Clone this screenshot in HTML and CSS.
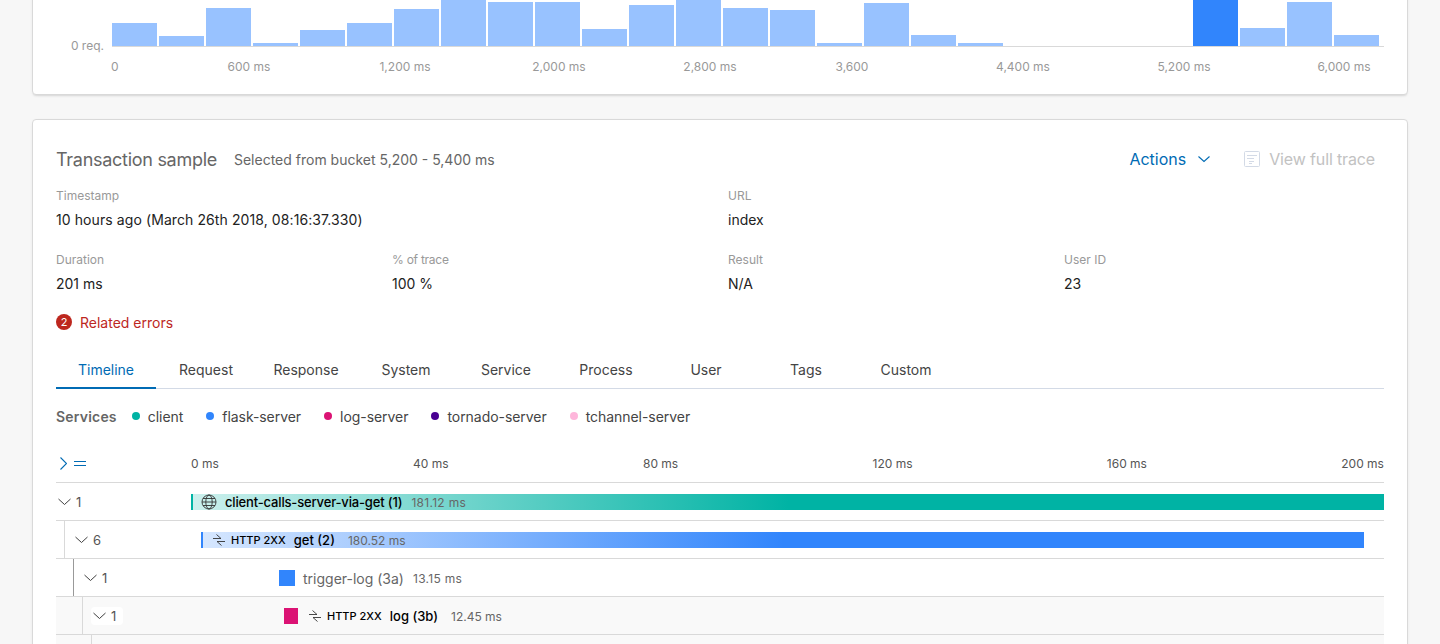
FILE: index.html
```html
<!DOCTYPE html>
<html lang="en">
<head>
<meta charset="utf-8">
<title>Transaction sample</title>
<link rel="stylesheet" href="styles.css">
</head>
<body>
<main class="page">
  <section class="panel panel-chart">
    <svg class="histogram" width="1374" height="96" viewBox="0 0 1374 96">
      <g class="bars">
        <rect x="79" y="42" width="45" height="23"/><rect x="126" y="55" width="45" height="10"/><rect x="173" y="27" width="45" height="38"/><rect x="220" y="62" width="45" height="3"/><rect x="267" y="49" width="45" height="16"/><rect x="314" y="42" width="45" height="23"/><rect x="361" y="28" width="45" height="37"/><rect x="408" y="19" width="45" height="46"/><rect x="455" y="21" width="45" height="44"/><rect x="502" y="21" width="45" height="44"/><rect x="549" y="48" width="45" height="17"/><rect x="596" y="24" width="45" height="41"/><rect x="643" y="19" width="45" height="46"/><rect x="690" y="27" width="45" height="38"/><rect x="737" y="29" width="45" height="36"/><rect x="784" y="62" width="45" height="3"/><rect x="831" y="22" width="45" height="43"/><rect x="878" y="54" width="45" height="11"/><rect x="925" y="62" width="45" height="3"/>
        <rect class="selected" x="1160" y="19" width="45" height="46"/>
        <rect x="1207" y="47" width="45" height="18"/><rect x="1254" y="21" width="45" height="44"/><rect x="1301" y="54" width="45" height="11"/>
      </g>
      <line class="baseline" x1="79" y1="65.5" x2="1351" y2="65.5"/>
      <text class="tick" x="71" y="69" text-anchor="end">0 req.</text>
      <text class="tick" x="78" y="90">0</text>
      <text class="tick" x="216" y="90" text-anchor="middle">600 ms</text>
      <text class="tick" x="372" y="90" text-anchor="middle">1,200 ms</text>
      <text class="tick" x="526" y="90" text-anchor="middle">2,000 ms</text>
      <text class="tick" x="677" y="90" text-anchor="middle">2,800 ms</text>
      <text class="tick" x="819" y="90" text-anchor="middle">3,600</text>
      <text class="tick" x="990" y="90" text-anchor="middle">4,400 ms</text>
      <text class="tick" x="1151" y="90" text-anchor="middle">5,200 ms</text>
      <text class="tick" x="1311" y="90" text-anchor="middle">6,000 ms</text>
    </svg>
  </section>

  <section class="panel panel-sample">
    <header class="sample-head">
      <div class="sample-title">
        <h2>Transaction sample</h2>
        <span class="bucket">Selected from bucket 5,200 - 5,400 ms</span>
      </div>
      <div class="sample-actions">
        <button class="btn-actions">Actions
          <svg width="14" height="14" viewBox="0 0 14 14"><path d="M1.500 4.500 7 9.500l5.500-5" fill="none" stroke="currentColor" stroke-width="1.100"/></svg>
        </button>
        <span class="btn-trace">
          <svg width="16" height="16" viewBox="0 0 16 16" fill="none" stroke="currentColor"><rect x="0.500" y="0.500" width="15" height="15" rx="1"/><path d="M3 4.500h10M3 7.500h7M5 10.500h5M5 12.500h3"/></svg>
          View full trace
        </span>
      </div>
    </header>

    <dl class="facts">
      <div class="fact span-2"><dt>Timestamp</dt><dd class="stamp">10 hours ago (March 26th 2018, 08:16:37.330)</dd></div>
      <div class="fact span-2"><dt>URL</dt><dd>index</dd></div>
      <div class="fact"><dt>Duration</dt><dd>201 ms</dd></div>
      <div class="fact"><dt class="trace-label">% of trace</dt><dd>100 %</dd></div>
      <div class="fact"><dt>Result</dt><dd>N/A</dd></div>
      <div class="fact"><dt>User ID</dt><dd>23</dd></div>
    </dl>

    <div class="related"><span class="badge">2</span><span>Related errors</span></div>

    <nav class="tabs">
      <span class="tab active">Timeline</span><span class="tab">Request</span><span class="tab">Response</span><span class="tab">System</span><span class="tab">Service</span><span class="tab">Process</span><span class="tab">User</span><span class="tab">Tags</span><span class="tab">Custom</span>
    </nav>

    <div class="services">
      <strong>Services</strong>
      <span class="svc"><i class="dot teal"></i>client</span>
      <span class="svc"><i class="dot blue"></i>flask-server</span>
      <span class="svc"><i class="dot pink"></i>log-server</span>
      <span class="svc"><i class="dot purple"></i>tornado-server</span>
      <span class="svc"><i class="dot light"></i>tchannel-server</span>
    </div>

    <div class="timeline-head">
      <div class="head-left">
        <svg width="7" height="13" viewBox="0 0 7 13"><path d="M.5.500l6 6-6 6" fill="none" stroke="currentColor" stroke-width="1.100"/></svg>
        <svg width="12" height="5" viewBox="0 0 12 5"><path d="M0 .5h12M0 4.500h12" fill="none" stroke="currentColor"/></svg>
      </div>
      <div class="ticks"><span>0 ms</span><span>40 ms</span><span>80 ms</span><span>120 ms</span><span>160 ms</span><span>200 ms</span></div>
    </div>

    <div class="row">
      <div class="row-left lvl-0">
        <span class="toggle"><svg class="chev" width="13" height="8" viewBox="0 0 13 8"><path d="M.5 1l6 5.500 6-5.500" fill="none" stroke="currentColor"/></svg>1</span>
      </div>
      <div class="track">
        <div class="bar bar-teal" style="margin-left:0;width:1193px">
          <svg class="globe" width="16" height="16" viewBox="0 0 16 16" fill="none" stroke="currentColor" stroke-width="0.900"><circle cx="8" cy="8" r="7"/><ellipse cx="8" cy="8" rx="3.200" ry="7"/><path d="M1 8h14M2 4.500h12M2 11.500h12"/></svg>
          <span class="name long">client-calls-server-via-get (1)</span>
          <span class="dur dur-ones">181.12 ms</span>
        </div>
      </div>
    </div>

    <div class="row">
      <div class="row-left lvl-1">
        <span class="toggle"><svg class="chev" width="13" height="8" viewBox="0 0 13 8"><path d="M.5 1l6 5.500 6-5.500" fill="none" stroke="currentColor"/></svg>6</span>
      </div>
      <div class="track">
        <div class="bar bar-blue" style="margin-left:10px;width:1163px">
          <svg class="http" width="12" height="12" viewBox="0 0 12 12" fill="none" stroke="currentColor" stroke-width="0.900"><path d="M0 4.500h8M3.500.5 8 4.500M12 7.500H4M8.500 11.500 4 7.500"/></svg>
          <span class="status">HTTP 2XX</span>
          <span class="name">get (2)</span>
          <span class="dur dur-wide">180.52 ms</span>
        </div>
      </div>
    </div>

    <div class="row">
      <div class="row-left lvl-2">
        <span class="toggle"><svg class="chev" width="13" height="8" viewBox="0 0 13 8"><path d="M.5 1l6 5.500 6-5.500" fill="none" stroke="currentColor"/></svg>1</span>
      </div>
      <div class="track">
        <div class="span" style="margin-left:88px">
          <i class="square sq-blue"></i>
          <span class="plain">trigger-log (3a)</span>
          <span class="dur dur-ones">13.15 ms</span>
        </div>
      </div>
    </div>

    <div class="row shaded">
      <div class="row-left lvl-3">
        <span class="toggle boxed"><svg class="chev" width="13" height="8" viewBox="0 0 13 8"><path d="M.5 1l6 5.500 6-5.500" fill="none" stroke="currentColor"/></svg>1</span>
      </div>
      <div class="track">
        <div class="span" style="margin-left:93px">
          <i class="square sq-pink"></i>
          <svg class="http after-sq" width="12" height="12" viewBox="0 0 12 12" fill="none" stroke="currentColor" stroke-width="0.900"><path d="M0 4.500h8M3.500.5 8 4.500M12 7.500H4M8.500 11.500 4 7.500"/></svg>
          <span class="status">HTTP 2XX</span>
          <span class="name">log (3b)</span>
          <span class="dur dur-wide">12.45 ms</span>
        </div>
      </div>
    </div>

    <div class="row shaded">
      <div class="row-left lvl-4"></div>
      <div class="track"></div>
    </div>
  </section>
</main>
</body>
</html>
```
FILE: styles.css
```css
html, body {
  margin: 0;
  height: 644px;
  overflow: hidden;
  background: #f7f7f7;
}
body, button {
  font-family: Inter, "Liberation Sans", sans-serif;
  color: #000;
}
.page {
  padding: 0 32px;
}
.panel {
  background: #fff;
  border: 1px solid #d9d9d9;
  border-radius: 4px;
  box-shadow: 0 2px 2px -1px rgba(0, 0, 0, 0.1), 0 1px 5px -2px rgba(0, 0, 0, 0.1);
}
.panel-chart {
  margin-top: -20px;
  height: 113px;
}
.histogram {
  display: block;
}
.bars rect {
  fill: #98c2ff;
}
.bars .selected {
  fill: #3185fc;
}
.baseline {
  stroke: #d9d9d9;
  stroke-width: 1;
}
.tick {
  font-size: 12px;
  fill: #999;
}
.panel-sample {
  margin-top: 24px;
  padding: 27px 23px 0;
  height: 700px;
}
.sample-head {
  display: flex;
  justify-content: space-between;
  align-items: center;
  height: 24px;
}
.sample-title {
  display: flex;
  align-items: center;
  gap: 17px;
}
h2 {
  margin: 0;
  font-size: 18px;
  font-weight: 400;
  letter-spacing: -0.28px;
  color: #666;
}
.bucket {
  font-size: 14px;
  color: #666;
}
.sample-actions {
  display: flex;
  align-items: center;
  padding-right: 9px;
  font-size: 16px;
}
.btn-actions {
  display: flex;
  align-items: center;
  gap: 11px;
  border: 0;
  padding: 0;
  background: none;
  font-size: 16px;
  color: #006bb4;
}
.btn-trace {
  display: flex;
  align-items: center;
  gap: 9px;
  margin-left: 33px;
  letter-spacing: -0.14px;
  color: #c2c2c2;
}
.btn-trace svg {
  color: #d3dae6;
}
.facts {
  display: grid;
  grid-template-columns: repeat(4, 336px);
  row-gap: 22px;
  margin: 17px 0 0;
}
.fact {
  margin: 0;
}
.span-2 {
  grid-column: span 2;
}
dt {
  height: 16px;
  line-height: 16px;
  font-size: 12px;
  color: #999;
}
.trace-label {
  letter-spacing: -0.25px;
}
dd {
  margin: 6px 0 0;
  height: 20px;
  line-height: 20px;
  font-size: 14px;
  color: #222;
}
.stamp {
  letter-spacing: 0.09px;
}
.related {
  display: flex;
  align-items: center;
  gap: 8px;
  margin-top: 18px;
  height: 20px;
  font-size: 14px;
  color: #bd271e;
}
.badge {
  width: 16px;
  height: 16px;
  border-radius: 50%;
  background: #bd271e;
  color: #fff;
  font-size: 11px;
  line-height: 16px;
  text-align: center;
}
.tabs {
  display: flex;
  margin-top: 20px;
  border-bottom: 1px solid #d3dae6;
}
.tab {
  width: 100px;
  height: 36px;
  line-height: 36px;
  margin-bottom: -1px;
  text-align: center;
  font-size: 14px;
  color: #444;
}
.tab.active {
  height: 35px;
  border-bottom: 2px solid #006bb4;
  color: #006bb4;
}
.services {
  display: flex;
  align-items: center;
  height: 20px;
  margin-top: 17px;
  font-size: 14px;
  color: #444;
}
.services strong {
  margin-right: 15px;
  font-weight: 600;
  letter-spacing: 0.2px;
  color: #666;
}
.svc {
  display: flex;
  align-items: center;
  gap: 8px;
  margin-right: 23px;
  letter-spacing: -0.05px;
}
.dot {
  width: 8px;
  height: 8px;
  border-radius: 50%;
}
.teal { background: #00b3a4; }
.blue { background: #3185fc; }
.pink { background: #db1374; }
.purple { background: #490092; }
.light { background: #feb6db; }
.timeline-head {
  display: flex;
  align-items: center;
  height: 20px;
  margin-top: 27px;
  padding-bottom: 9px;
}
.head-left {
  display: flex;
  align-items: center;
  gap: 7px;
  width: 135px;
  padding-left: 4px;
  box-sizing: border-box;
  color: #006bb4;
}
.ticks {
  flex: 1;
  display: flex;
  justify-content: space-between;
  font-size: 12px;
  color: #555;
}
.row {
  display: flex;
  height: 37px;
  border-top: 1px solid #d9d9d9;
}
.shaded {
  background: #f9f9f9;
}
.row-left {
  position: relative;
  box-sizing: border-box;
  width: 135px;
  height: 37px;
  flex: none;
}
.lvl-0 { padding-left: 2px; }
.lvl-1 { padding-left: 19px; }
.lvl-2 { padding-left: 28px; }
.lvl-3 { padding-left: 35px; }
.lvl-1::before, .lvl-2::before, .lvl-3::before, .lvl-4::before {
  content: "";
  position: absolute;
  top: 0;
  bottom: 0;
  width: 1px;
  background: #d9d9d9;
}
.lvl-1::before { left: 8px; }
.lvl-2::before { left: 17px; background: #999; }
.lvl-3::before { left: 26px; }
.lvl-4::before { left: 35px; }
.toggle {
  display: flex;
  align-items: center;
  gap: 5px;
  height: 37px;
  font-size: 13px;
  color: #555;
}
.toggle.boxed {
  box-sizing: border-box;
  width: 32px;
  height: 18px;
  margin-top: 10px;
  padding-left: 2px;
  background: #fff;
  border-radius: 4px;
}
.chev {
  flex: none;
  color: #3f3f3f;
}
.track {
  flex: 1;
  min-width: 0;
}
.bar {
  display: flex;
  align-items: center;
  box-sizing: border-box;
  height: 16px;
  margin-top: 11px;
  border-left: 2px solid;
  white-space: nowrap;
}
.bar-teal {
  border-color: #00b3a4;
  background: linear-gradient(90deg, rgba(0, 179, 164, 0.2), #00b3a4 50%);
}
.bar-blue {
  border-color: #3185fc;
  background: linear-gradient(90deg, rgba(49, 133, 252, 0.2), #3185fc 50%);
}
.globe {
  margin-left: 8px;
  color: #333;
}
.bar-teal .name {
  margin-left: 8px;
}
.name {
  font-size: 13px;
  font-weight: 500;
  color: #000;
}
.name.long {
  letter-spacing: -0.16px;
}
.dur {
  margin-left: 9px;
  font-size: 12px;
  color: #666;
}
.dur-ones {
  letter-spacing: 0.3px;
}
.dur-wide {
  margin-left: 13px;
}
.http {
  flex: none;
  margin-left: 10px;
  color: #333;
}
.http.after-sq {
  margin-left: 11px;
}
.status {
  margin: 0 8px 0 6px;
  font-size: 11px;
  font-weight: 500;
}
.span {
  display: flex;
  align-items: center;
  height: 16px;
  margin-top: 11px;
  white-space: nowrap;
}
.square {
  flex: none;
  height: 16px;
}
.sq-blue {
  width: 16px;
  background: #3185fc;
}
.sq-pink {
  width: 14px;
  background: #db1374;
}
.plain {
  margin-left: 8px;
  font-size: 14px;
  color: #666;
}
```
